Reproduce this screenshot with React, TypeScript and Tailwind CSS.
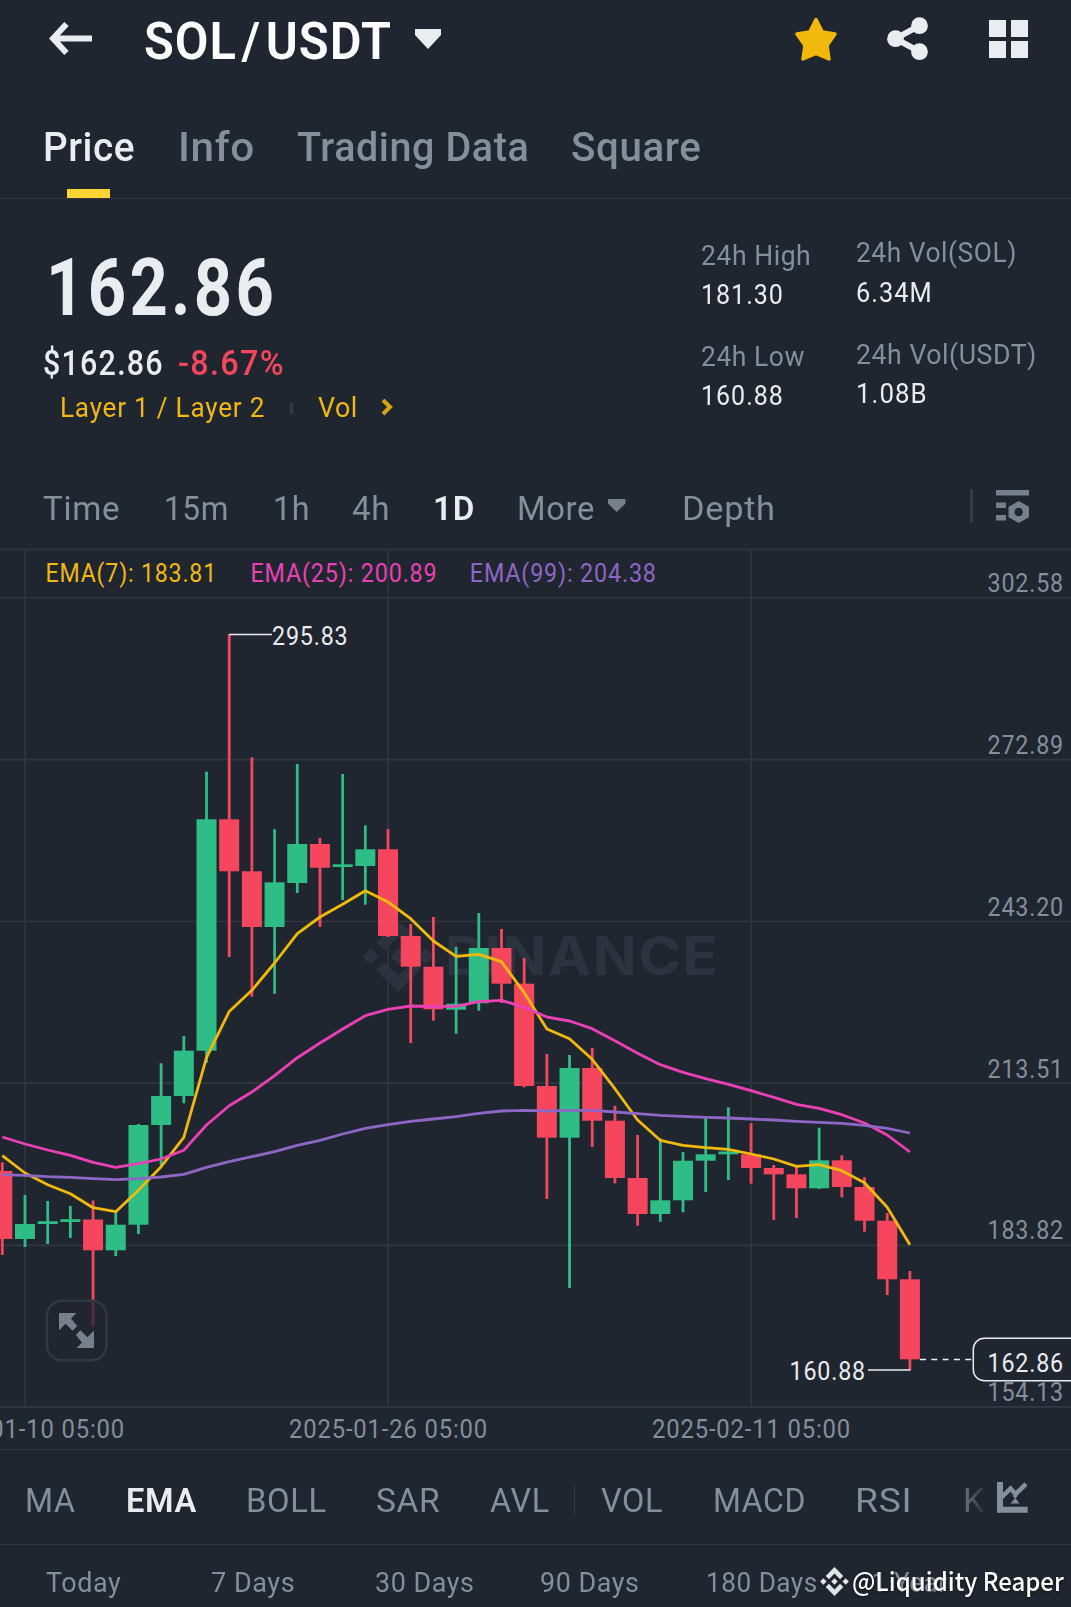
import { useLayoutEffect, useRef, type ReactNode } from "react";

/** Single-line text whose glyphs are stretched or condensed to fill its box. */
function Fit({ className = "", children }: { className?: string; children: ReactNode }) {
  const box = useRef<HTMLSpanElement>(null);
  const inner = useRef<HTMLSpanElement>(null);
  useLayoutEffect(() => {
    if (!box.current || !inner.current) return;
    const ratio = box.current.clientWidth / inner.current.offsetWidth;
    inner.current.style.transform = `scaleX(${ratio})`;
  });
  return (
    <span ref={box} className={`block shrink-0 whitespace-nowrap ${className}`}>
      <span ref={inner} className="inline-block origin-left align-top">
        {children}
      </span>
    </span>
  );
}

const FIRST_X = 2.3;
const STEP = 22.69;
const GREEN = "#2ebd85";
const RED = "#f6465d";

// [rising, high, bodyTop, bodyBottom, low]
const candles: [number, number, number, number, number][] = [
  [0, 1162.3, 1171, 1239, 1255],
  [1, 1195, 1224, 1239, 1247],
  [1, 1201, 1221.2, 1224, 1244],
  [1, 1206, 1219.2, 1222, 1238],
  [0, 1200.5, 1219.5, 1250.3, 1326.5],
  [1, 1211.7, 1224.7, 1250.3, 1256],
  [1, 1124, 1125, 1224.7, 1234],
  [1, 1063.3, 1096, 1125, 1165.7],
  [1, 1036, 1050.7, 1096, 1103.3],
  [1, 771.7, 819.3, 1050.7, 1062.7],
  [0, 634.3, 819.3, 871.3, 957],
  [0, 757.3, 871.3, 927, 996.7],
  [1, 829.3, 882.3, 927, 993.7],
  [1, 764, 844, 883, 893],
  [0, 838, 844, 867.7, 927],
  [1, 774, 864.3, 867, 900],
  [1, 825.3, 849.3, 866, 904.7],
  [0, 829, 849.3, 936, 937],
  [0, 924, 936, 966.7, 1043],
  [0, 917, 966.7, 1009.3, 1020.7],
  [1, 947, 1003.7, 1009.7, 1033.7],
  [1, 913, 948, 1003.3, 1010.7],
  [0, 929, 948, 983.7, 1003],
  [0, 958, 983.7, 1086, 1087.3],
  [0, 1054, 1086, 1137.7, 1199],
  [1, 1055, 1068, 1137.7, 1288],
  [0, 1048, 1068, 1120.7, 1147],
  [0, 1105.7, 1120.7, 1178, 1183.3],
  [0, 1135, 1178, 1214, 1225.7],
  [1, 1138.3, 1200.3, 1214, 1221.7],
  [1, 1152, 1160.7, 1200.3, 1212.3],
  [1, 1117.7, 1154.3, 1160.7, 1192],
  [1, 1107.3, 1151.5, 1154.3, 1180],
  [0, 1123.3, 1154.3, 1168, 1183.7],
  [0, 1165, 1168, 1174.3, 1220],
  [0, 1166.7, 1174.3, 1188.3, 1218],
  [1, 1127.7, 1160.3, 1188.3, 1189],
  [0, 1155.3, 1160.3, 1187, 1197.3],
  [0, 1177.3, 1187, 1220.7, 1231.7],
  [0, 1213, 1220.7, 1279.3, 1295],
  [0, 1271, 1279.3, 1359.3, 1370],
];

const ema7 = [
  1155.7, 1173, 1184.7, 1193.7, 1207.7, 1211.7, 1190.3, 1166.7, 1137.3, 1057.7, 1011.5, 990.3, 963, 933.7,
  917, 904.3, 890.7, 902, 918.7, 941, 956.3, 954.3, 961.7, 992.7, 1029, 1038.7, 1059.3, 1088.7, 1120, 1140.3,
  1145.3, 1147.7, 1149.3, 1154, 1159, 1166.3, 1164.7, 1170.7, 1182.7, 1207.3, 1244.7,
];
const ema25 = [
  1137, 1144, 1150, 1155.3, 1162.3, 1167.3, 1163.7, 1159, 1150.3, 1125, 1105.7, 1092, 1075.7, 1057.7, 1043,
  1029, 1015.7, 1009.3, 1006, 1006.3, 1006.3, 1001.7, 1000.3, 1007.3, 1017, 1021, 1028.7, 1040.7, 1053.3,
  1064.7, 1072.3, 1078.7, 1084.3, 1090.7, 1097.3, 1104.3, 1108.3, 1114.7, 1123, 1135, 1152,
];
const ema99 = [
  1174.7, 1175.3, 1176.7, 1177.3, 1178.7, 1179.7, 1178.7, 1177, 1174.3, 1167.3, 1161.7, 1156.7, 1151.7,
  1145.3, 1140.3, 1134, 1128.3, 1124.7, 1121.3, 1119, 1116.7, 1113.3, 1111, 1110.3, 1111, 1110.3, 1110.3,
  1112, 1113.7, 1115.3, 1116.3, 1117.3, 1118, 1119, 1120, 1121.3, 1122.3, 1123.3, 1125.3, 1128.3, 1133,
];

const toPoints = (ys: number[]) => ys.map((y, i) => `${(FIRST_X + i * STEP).toFixed(1)},${y}`).join(" ");

const priceScale: [string, number][] = [
  ["302.58", 592.2],
  ["272.89", 754.2],
  ["243.20", 916.2],
  ["213.51", 1078.3],
  ["183.82", 1239.3],
  ["154.13", 1401.3],
];

const dates: [string, number][] = [
  ["2025-01-10 05:00", 25],
  ["2025-01-26 05:00", 388],
  ["2025-02-11 05:00", 751],
];

function Label({ x, y, w, fill = "#848e9c", children }: { x: number; y: number; w: number; fill?: string; children: string }) {
  return (
    <text x={x} y={y} fill={fill} fontSize={25.3} letterSpacing={0.9} textLength={w} lengthAdjust="spacingAndGlyphs">
      {children}
    </text>
  );
}

function Diamonds({ fill }: { fill: string }) {
  return (
    <path
      fill={fill}
      d="M38.7 53.2 64 27.9l25.3 25.3 14.7-14.7L64-1.5l-40 40zM-1.5 64l14.7-14.7L27.9 64 13.2 78.7zM38.7 74.8 64 100.1l25.3-25.3 14.7 14.7-40 40-40-40zM100.1 64l14.7-14.7L129.5 64l-14.7 14.7zM78.9 64 64 49.1 49.1 64 64 78.9z"
    />
  );
}

function Chart() {
  return (
    <svg viewBox="0 548 1071 901" className="block h-[901px] w-[1071px] shrink-0 font-[Roboto,sans-serif]">
      <rect x="0" y="548" width="1071" height="3" fill="#2a303b" />
      <g stroke="#303641" strokeWidth="1.7">
        {[598, 759.7, 921.5, 1083.2, 1245.3].map((y) => (
          <line key={y} x1="0" x2="1071" y1={y} y2={y} />
        ))}
        {[25, 388, 751.2].map((x) => (
          <line key={x} x1={x} x2={x} y1="551" y2="1407" />
        ))}
        <line x1="0" x2="1071" y1="1407" y2="1407" strokeWidth="2" />
      </g>

      <g transform="translate(363.5 921.5) scale(0.545)">
        <Diamonds fill="#2d333e" />
      </g>
      <text
        x="445"
        y="975"
        fill="#2d333e"
        fontSize="54"
        letterSpacing="1.5"
        className="font-[Inter,sans-serif] font-bold"
        textLength="274"
        lengthAdjust="spacingAndGlyphs"
      >
        BINANCE
      </text>

      {candles.map(([up, high, top, bottom, low], i) => {
        const x = FIRST_X + i * STEP;
        const color = up ? GREEN : RED;
        return (
          <g key={i} fill={color}>
            <rect x={x - 1.4} y={high} width="2.8" height={low - high} />
            <rect x={x - 10} y={top} width="20" height={bottom - top} />
          </g>
        );
      })}

      <g fill="none" strokeWidth="2.8" strokeLinejoin="round">
        <polyline points={toPoints(ema7)} stroke="#f0b90b" />
        <polyline points={toPoints(ema25)} stroke="#eb40b5" />
        <polyline points={toPoints(ema99)} stroke="#8e66c6" />
      </g>

      <Label x={45.5} y={582.3} w={171.5} fill="#f0b90b">EMA(7): 183.81</Label>
      <Label x={250.5} y={582.3} w={187} fill="#eb40b5">EMA(25): 200.89</Label>
      <Label x={469.8} y={582.3} w={187} fill="#8e66c6">EMA(99): 204.38</Label>

      <line x1="229" x2="272" y1="634.5" y2="634.5" stroke="#eaecef" strokeWidth="1.6" />
      <Label x={272} y={645.3} w={76.5} fill="#eaecef">295.83</Label>
      <line x1="868" x2="910.5" y1="1370" y2="1370" stroke="#eaecef" strokeWidth="1.6" />
      <Label x={789.5} y={1380.3} w={76.5} fill="#eaecef">160.88</Label>

      {priceScale.map(([label, y]) => (
        <Label key={label} x={987.5} y={y} w={76.5}>{label}</Label>
      ))}

      <line x1="920" x2="972" y1="1359.5" y2="1359.5" stroke="#eaecef" strokeWidth="1.4" strokeDasharray="6 5.3" />
      <rect x="973.3" y="1338.3" width="120" height="42.5" rx="11" fill="#202630" stroke="#eaecef" strokeWidth="1.5" />
      <Label x={987.5} y={1372.3} w={76.5} fill="#eaecef">162.86</Label>

      {dates.map(([label, x]) => (
        <Label key={label} x={x - 99} y={1438.3} w={199}>{label}</Label>
      ))}

      <rect x="47" y="1300.700" width="59.5" height="59.5" rx="15" fill="#202630" fillOpacity="0.75" stroke="#313743" strokeWidth="2.5" />
      <path
        fill="#777e8c"
        d="M59 1313h17.500l-5.500 5.500 6.200 7.600-4.600 4.600-7-7-6.600 6.800zM94 1348H76.500l5.500-5.500-6.200-7.600 4.600-4.600 7 7 6.600-6.800z"
      />
    </svg>
  );
}

function Stat({ label, value, labelWidth, valueWidth, gap }: { label: string; value: string; labelWidth: string; valueWidth: string; gap: string }) {
  return (
    <div className={`flex flex-col ${gap}`}>
      <Fit className={`leading-[30px] tracking-[0.02em] text-[#848e9c] ${labelWidth}`}>{label}</Fit>
      <Fit className={`leading-[30px] tracking-[0.04em] text-[#eaecef] ${valueWidth}`}>{value}</Fit>
    </div>
  );
}

export default function App() {
  return (
    <div className="relative flex h-[1607px] w-[1071px] flex-col overflow-hidden bg-[#202630] font-[Roboto,sans-serif] text-[#848e9c]">
      <header className="flex h-[78px] shrink-0 items-center">
        <svg viewBox="0 0 44 36" className="ml-[49px] h-9 w-11 shrink-0">
          <path d="M5 17.500H43M17.500 3 4 17.500l13.500 14.500" fill="none" stroke="#eaecef" strokeWidth="6" />
        </svg>
        <h1 className="ml-[51px] pt-1.5">
          <Fit className="w-[248px] text-[52px] leading-[60px] font-semibold tracking-[0.02em] text-white">
            SOL<span className="px-[5px]">/</span>USDT
          </Fit>
        </h1>
        <svg viewBox="0 0 26 20" className="ml-[23px] h-5 w-[26px] shrink-0">
          <path d="M0 0h26v6L13 20 0 6z" fill="#eaecef" />
        </svg>
        <svg viewBox="0 0 42 44" className="ml-[354px] h-11 w-[42px] shrink-0">
          <path
            d="M21 2.500 27.300 15 40 17 32 28.500 34 42 21 36.500 8 42 10 28.500 2 17 14.700 15z"
            fill="#f0b90b"
            stroke="#f0b90b"
            strokeWidth="3.500"
            strokeLinejoin="round"
          />
        </svg>
        <svg viewBox="0 0 42 44" className="ml-[50px] h-11 w-[42px] shrink-0" fill="#eaecef">
          <circle cx="32.500" cy="8.700" r="8.400" />
          <circle cx="8.500" cy="21.700" r="8.400" />
          <circle cx="32.500" cy="34.700" r="8.400" />
          <path d="M32.500 8.700 8.500 21.700l24 13" fill="none" stroke="#eaecef" strokeWidth="6" />
        </svg>
        <div className="ml-[60px] grid grid-cols-2 gap-[4.5px]">
          {[0, 1, 2, 3].map((i) => (
            <span key={i} className="h-[17px] w-[17px] bg-[#eaecef]" />
          ))}
        </div>
      </header>

      <nav className="flex h-[121px] shrink-0 border-b border-[#2e3440] pt-[50px] text-[40px] leading-[40px] font-medium tracking-[0.015em]">
        <div className="relative ml-[43px] w-[93px]">
          <Fit className="w-[92px] text-[#eaecef]">Price</Fit>
          <span className="absolute bottom-0 left-6 h-[9px] w-[43px] bg-[#fcd535]" />
        </div>
        <Fit className="ml-[42px] w-[77px]">Info</Fit>
        <Fit className="ml-[42px] w-[232px]">Trading Data</Fit>
        <Fit className="ml-[42px] w-[130px]">Square</Fit>
      </nav>

      <section className="flex h-[250px] shrink-0">
        <div className="flex w-[701px] flex-col pt-[49px]">
          <Fit className="ml-[46px] w-[231px] text-[79px] leading-[80px] font-bold tracking-[0.05em] text-[#eaecef]">162.86</Fit>
          <div className="mt-[17px] ml-[43px] flex gap-[14px] text-[34.5px] leading-[36px] font-medium tracking-[0.04em]">
            <Fit className="w-[121px] text-[#eaecef]">$162.86</Fit>
            <Fit className="w-[107px] text-[#f6465d]">-8.67%</Fit>
          </div>
          <div className="mt-[13px] ml-[60px] flex items-center text-[27.5px] leading-[28px] text-[#f0b90b]">
            <Fit className="w-[205px] tracking-[0.03em]">Layer 1 / Layer 2</Fit>
            <span className="ml-[25px] h-[11px] w-[3px] bg-[#333b47]" />
            <Fit className="ml-[25px] w-[40px] tracking-[0.02em]">Vol</Fit>
            <svg viewBox="0 0 12 18" className="ml-[23px] h-[18px] w-3">
              <path d="m2 1 7 7-7 7" fill="none" stroke="#d9a50f" strokeWidth="4" />
            </svg>
          </div>
        </div>
        <div className="flex w-[155px] flex-col gap-8 pt-[42px] text-[28px]">
          <Stat label="24h High" value="181.30" labelWidth="w-[110px]" valueWidth="w-[83px]" gap="gap-[9px]" />
          <Stat label="24h Low" value="160.88" labelWidth="w-[104px]" valueWidth="w-[83px]" gap="gap-[9px]" />
        </div>
        <div className="flex flex-col gap-8 pt-[39px] text-[28px]">
          <Stat label="24h Vol(SOL)" value="6.34M" labelWidth="w-[161px]" valueWidth="w-[77px]" gap="gap-[10px]" />
          <Stat label="24h Vol(USDT)" value="1.08B" labelWidth="w-[181px]" valueWidth="w-[72px]" gap="gap-[9px]" />
        </div>
      </section>

      <nav className="flex h-[99px] shrink-0 pt-[42px] text-[34px] leading-[34px] tracking-[0.02em]">
        <Fit className="ml-[43px] w-[77px]">Time</Fit>
        <Fit className="ml-[44px] w-[65px]">15m</Fit>
        <Fit className="ml-[44px] w-[37px]">1h</Fit>
        <Fit className="ml-[42px] w-[38px]">4h</Fit>
        <Fit className="ml-[43px] w-[42px] font-semibold text-[#eaecef]">1D</Fit>
        <Fit className="ml-[42px] w-[78px]">More</Fit>
        <svg viewBox="0 0 18 13" className="mt-2 ml-[13px] h-[13px] w-[18px] shrink-0">
          <path d="M0 0h17.500v4.500L8.700 13 0 4.500z" fill="#777e8c" />
        </svg>
        <Fit className="ml-[56px] w-[94px]">Depth</Fit>
        <span className="-mt-[2px] ml-[194px] h-[34px] w-[3px] shrink-0 bg-[#333b47]" />
        <svg viewBox="0 0 33 33" className="-mt-px ml-[23px] h-[33px] w-[33px] shrink-0" fill="#777e8c">
          <path d="M0 0h33v5.500H0zM0 12.500h10V18H0zM0 25h10v5.500H0z" />
          <path
            fillRule="evenodd"
            d="M22.700 11 33 16.700v10.600L22.700 33l-10.200-5.700V16.700zM22.700 17.800a4.200 4.200 0 1 0 0 8.400 4.200 4.200 0 0 0 0-8.400z"
          />
        </svg>
      </nav>

      <Chart />

      <nav className="flex h-[95px] shrink-0 items-center border-t border-[#2e3440] pt-[5px] text-[34px] leading-[34px] tracking-[0.02em]">
        <Fit className="ml-[25px] w-[51px]">MA</Fit>
        <Fit className="ml-[50px] w-[71px] font-semibold text-[#eaecef]">EMA</Fit>
        <Fit className="ml-[49px] w-[81px]">BOLL</Fit>
        <Fit className="ml-[49px] w-[64px]">SAR</Fit>
        <Fit className="ml-[50px] w-[60px]">AVL</Fit>
        <span className="ml-[24px] h-[34px] w-px shrink-0 bg-[#333b47]" />
        <Fit className="ml-[26px] w-[62px]">VOL</Fit>
        <Fit className="ml-[50px] w-[93px]">MACD</Fit>
        <Fit className="ml-[49px] w-[57px]">RSI</Fit>
        <span className="ml-[51px] block w-[23px] bg-gradient-to-r from-[#6a7280] to-[#2a303b] bg-clip-text text-transparent">K</span>
        <svg viewBox="0 0 31 31" className="-mt-1 ml-[11px] h-[31px] w-[31px] shrink-0" fill="#848e9c">
          <path d="M0 0h6v24.700h24.700v6H0z" />
          <path d="m4 16 9.500-9.500 5 5.500L29 2" fill="none" stroke="#848e9c" strokeWidth="4.500" />
          <path d="M13.500 21.500h9L18.200 16zM15.500 13.500h5.500L18.200 17z" />
        </svg>
      </nav>

      <footer className="flex h-[63px] shrink-0 items-center border-t border-[#2e3440] pt-[14px] text-[28px] leading-[30px] tracking-[0.02em]">
        <Fit className="ml-[46px] w-[75px]">Today</Fit>
        <Fit className="ml-[90px] w-[84px]">7 Days</Fit>
        <Fit className="ml-[80px] w-[99px]">30 Days</Fit>
        <Fit className="ml-[66px] w-[99px]">90 Days</Fit>
        <Fit className="ml-[67px] w-[112px]">180 Days</Fit>
        <Fit className="ml-[54px] w-[76px]">1 Year</Fit>
      </footer>

      <div className="absolute right-[7px] bottom-[8px] flex items-center gap-[3px] font-['Noto_Sans_CJK_SC','Noto_Sans',sans-serif] text-[25.5px] leading-[32px] font-medium text-white [text-shadow:0_1px_3px_rgba(0,0,0,0.6)]">
        <svg viewBox="-2 -2 132 132" className="h-[29px] w-[29px] shrink-0">
          <Diamonds fill="#e2e3e5" />
        </svg>
        <Fit className="mb-[3px] w-[212px]">@Liquidity Reaper</Fit>
      </div>
    </div>
  );
}
